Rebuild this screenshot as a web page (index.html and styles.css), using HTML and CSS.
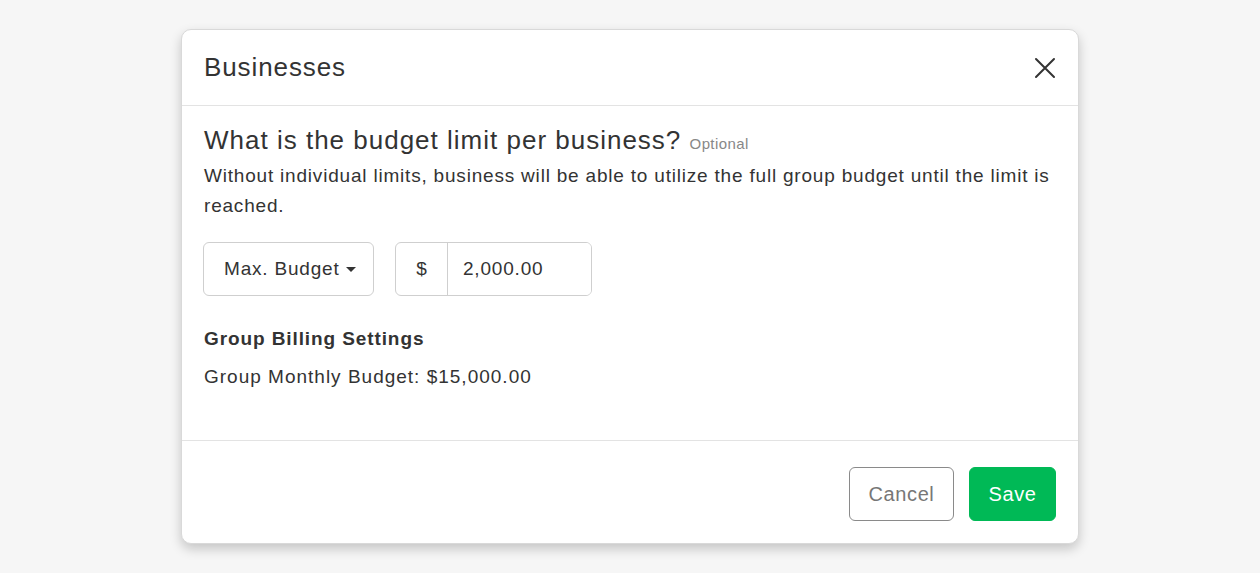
FILE: index.html
```html
<!DOCTYPE html>
<html lang="en">
<head>
    <meta charset="UTF-8">
    <meta name="viewport" content="width=device-width, initial-scale=1.0">
    <title>Businesses</title>
    <link rel="stylesheet" href="styles.css">
</head>
<body>
    <div class="modal">
        <div class="modal-header">
            <h1>Businesses</h1>
            <button class="close-button" type="button" aria-label="Close">
                <svg width="22" height="22" viewBox="0 0 22 22">
                    <path d="M2 2 L20 20 M20 2 L2 20" stroke="#333" stroke-width="2" stroke-linecap="round" fill="none"/>
                </svg>
            </button>
        </div>

        <div class="modal-body">
            <h2>What is the budget limit per business? <span class="optional">Optional</span></h2>
            <p class="description">
                Without individual limits, business will be able to utilize the full group budget until the limit is reached.
            </p>

            <div class="budget-row">
                <button class="select-button" type="button">
                    Max. Budget <span class="caret"></span>
                </button>
                <div class="input-group">
                    <span class="addon">$</span>
                    <input class="amount" type="text" value="2,000.00">
                </div>
            </div>

            <h3>Group Billing Settings</h3>
            <p class="group-budget">Group Monthly Budget: $15,000.00</p>
        </div>

        <div class="modal-footer">
            <button class="btn btn-cancel" type="button">Cancel</button>
            <button class="btn btn-save" type="button">Save</button>
        </div>
    </div>
</body>
</html>
```

FILE: styles.css
```css
body {
    font-family: "Liberation Sans", Arial, sans-serif;
    background-color: #f6f6f6;
    color: #333;
    margin: 0;
    padding: 29px 0 30px;
}
.modal {
    width: 896px;
    margin: 0 auto;
    background-color: white;
    border: 1px solid #d9d9d9;
    border-radius: 10px;
    box-shadow: 0 5px 12px rgba(0, 0, 0, 0.2);
}
.modal-header {
    height: 75px;
    padding: 0 22px;
    display: flex;
    align-items: center;
    justify-content: space-between;
    border-bottom: 1px solid #e3e3e3;
}
h1 {
    margin: 0;
    font-size: 26px;
    font-weight: normal;
    letter-spacing: 0.9px;
    color: #333;
}
.close-button {
    background: none;
    border: none;
    padding: 0;
    width: 22px;
    height: 22px;
    cursor: pointer;
}
.close-button svg {
    display: block;
}
.modal-body {
    padding: 16px 22px 50px;
}
h2 {
    margin: 0;
    font-size: 26px;
    line-height: 36px;
    font-weight: normal;
    letter-spacing: 1px;
}
.optional {
    font-size: 15px;
    line-height: 1;
    color: #888;
    letter-spacing: 0.4px;
}
.description {
    margin: 3px 0 0;
    font-size: 19px;
    line-height: 30px;
    letter-spacing: 0.8px;
}
.budget-row {
    display: flex;
    gap: 21px;
    margin-top: 21px;
    margin-left: -1px;
}
.select-button {
    width: 171px;
    height: 54px;
    display: flex;
    align-items: center;
    gap: 7px;
    padding: 0 0 0 20px;
    background-color: white;
    border: 1px solid #cfcfcf;
    border-radius: 6px;
    font-family: inherit;
    font-size: 19px;
    letter-spacing: 0.8px;
    color: #333;
}
.caret {
    width: 0;
    height: 0;
    border-left: 5px solid transparent;
    border-right: 5px solid transparent;
    border-top: 5px solid #333;
}
.input-group {
    display: flex;
    width: 197px;
    height: 54px;
    border: 1px solid #cfcfcf;
    border-radius: 6px;
    box-sizing: border-box;
    overflow: hidden;
}
.addon {
    width: 51px;
    display: flex;
    align-items: center;
    justify-content: center;
    border-right: 1px solid #cfcfcf;
    font-size: 19px;
}
.amount {
    flex: 1;
    min-width: 0;
    border: none;
    padding: 0 0 0 15px;
    font-family: inherit;
    font-size: 19px;
    letter-spacing: 0.8px;
    color: #333;
    outline: none;
}
h3 {
    margin: 30px 0 0;
    font-size: 19px;
    line-height: 26px;
    letter-spacing: 0.9px;
}
.group-budget {
    margin: 12px 0 0;
    font-size: 19px;
    line-height: 26px;
    letter-spacing: 1px;
}
.modal-footer {
    display: flex;
    justify-content: flex-end;
    gap: 15px;
    padding: 26px 22px 22px;
    border-top: 1px solid #e3e3e3;
}
.btn {
    height: 54px;
    padding: 0;
    border-radius: 6px;
    font-family: inherit;
    font-size: 20px;
    letter-spacing: 0.6px;
    cursor: pointer;
}
.btn-cancel {
    width: 105px;
    background-color: white;
    border: 1px solid #8a8a8a;
    color: #777;
}
.btn-save {
    width: 87px;
    background-color: #00b956;
    border: 1px solid #00b956;
    color: white;
}
```
